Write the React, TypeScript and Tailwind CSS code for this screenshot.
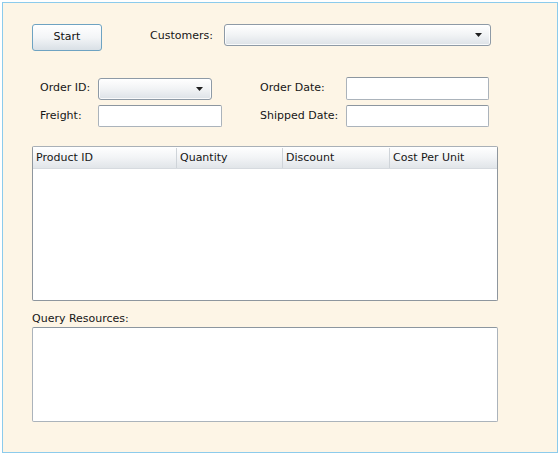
import React from 'react';

const font = { fontFamily: '"DejaVu Sans", Verdana, sans-serif' };

function Arrow() {
  return (
    <svg width="7" height="4" viewBox="0 0 7 4" className="shrink-0">
      <path d="M0 0 L7 0 L3.5 4 Z" fill="#1f1f1f" />
    </svg>
  );
}

function ComboBox({ className }: { className: string }) {
  return (
    <div
      className={`flex items-center justify-end pr-[8px] rounded-[3px] border border-[#8e9aa6] bg-gradient-to-b from-white via-[#f1f3f5] to-[#dde2e7] shadow-[inset_0_0_0_1px_rgba(255,255,255,0.8)] ${className}`}
    >
      <Arrow />
    </div>
  );
}

function TextBox({ className }: { className: string }) {
  return (
    <div
      className={`rounded-[2px] border border-[#abb3bb] border-t-[#8c969f] bg-white ${className}`}
    />
  );
}

export default function App() {
  return (
    <div className="w-[560px] h-[455px] bg-white p-[2px]" style={font}>
      <div className="w-[556px] h-[451px] border border-[#8ccbec] bg-[#fdf5e6] pl-[29px] pt-[21px] text-[11px] text-[#161616]">
        {/* top row */}
        <div className="flex items-start">
          <button className="w-[70px] h-[27px] rounded-[3px] border border-[#6ea3c2] bg-gradient-to-b from-white via-[#f3f5f7] to-[#d9e0e6] text-[11px] text-[#111]">
            Start
          </button>
          <div className="ml-[48px] w-[74px] mt-[5px] leading-[14px]">Customers:</div>
          <ComboBox className="w-[267px] h-[22px]" />
        </div>

        {/* order rows */}
        <div className="mt-[26px] grid grid-cols-[58px_123px_39px_86px_143px] gap-y-[5px] pl-[8px] items-center">
          <div>Order ID:</div>
          <ComboBox className="w-[114px] h-[22px]" />
          <div />
          <div>Order Date:</div>
          <TextBox className="w-[143px] h-[23px]" />

          <div>Freight:</div>
          <TextBox className="w-[124px] h-[22px]" />
          <div />
          <div>Shipped Date:</div>
          <TextBox className="w-[143px] h-[22px]" />
        </div>

        {/* data grid */}
        <div className="mt-[19px] w-[466px] h-[155px] rounded-[2px] border border-[#8e969e] border-t-[#a9b0b7] bg-white overflow-hidden">
          <div className="flex h-[22px] pt-[1px] border-b border-[#d6dadf] bg-gradient-to-b from-white via-[#f2f4f6] to-[#e1e5e9]">
            <div className="w-[144px] px-[3px] flex items-center border-r border-[#cfd4d9]">Product ID</div>
            <div className="w-[106px] px-[3px] flex items-center border-r border-[#cfd4d9]">Quantity</div>
            <div className="w-[107px] px-[3px] flex items-center border-r border-[#cfd4d9]">Discount</div>
            <div className="flex-1 px-[3px] flex items-center">Cost Per Unit</div>
          </div>
        </div>

        {/* query resources */}
        <div className="mt-[11px] leading-[14px]">Query Resources:</div>
        <TextBox className="mt-[1px] w-[466px] h-[95px]" />
      </div>
    </div>
  );
}
